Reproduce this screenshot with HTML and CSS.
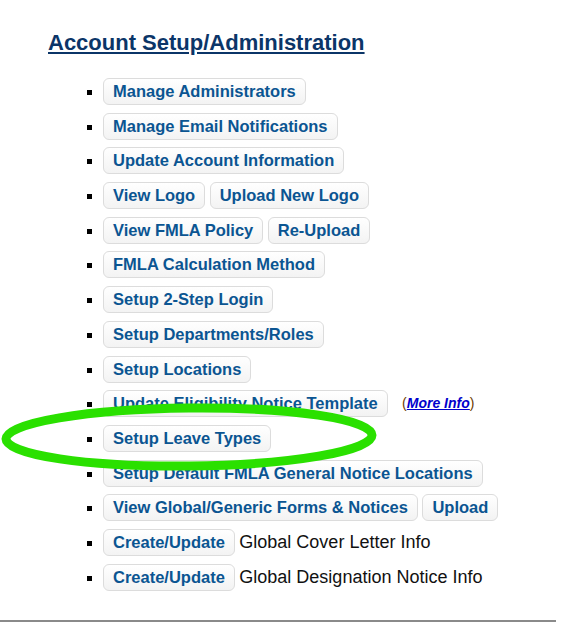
FILE: index.html
```html
<!DOCTYPE html>
<html lang="en">
<head>
    <meta charset="UTF-8">
    <meta name="viewport" content="width=device-width, initial-scale=1.0">
    <title>Account Setup/Administration</title>
    <link rel="stylesheet" href="styles.css">
</head>
<body>
    <div class="page">
        <h2 class="section-title">Account Setup/Administration</h2>

        <ul class="admin-list">
            <li><a class="btn" href="#">Manage Administrators</a></li>
            <li><a class="btn" href="#">Manage Email Notifications</a></li>
            <li><a class="btn" href="#">Update Account Information</a></li>
            <li><a class="btn" href="#">View Logo</a> <a class="btn" href="#">Upload New Logo</a></li>
            <li><a class="btn" href="#">View FMLA Policy</a> <a class="btn" href="#">Re-Upload</a></li>
            <li><a class="btn" href="#">FMLA Calculation Method</a></li>
            <li><a class="btn" href="#">Setup 2-Step Login</a></li>
            <li><a class="btn" href="#">Setup Departments/Roles</a></li>
            <li><a class="btn" href="#">Setup Locations</a></li>
            <li>
                <a class="btn" href="#">Update Eligibility Notice Template</a>
                <span class="more-info">(<a href="#">More Info</a>)</span>
            </li>
            <li><a class="btn" href="#">Setup Leave Types</a></li>
            <li><a class="btn" href="#">Setup Default FMLA General Notice Locations</a></li>
            <li><a class="btn" href="#">View Global/Generic Forms &amp; Notices</a> <a class="btn" href="#">Upload</a></li>
            <li><a class="btn" href="#">Create/Update</a> <span class="label">Global Cover Letter Info</span></li>
            <li><a class="btn" href="#">Create/Update</a> <span class="label">Global Designation Notice Info</span></li>
        </ul>

        <div class="divider"></div>

        <!-- highlight drawn over the list -->
        <svg class="highlight" width="390" height="90" viewBox="0 0 390 90">
            <ellipse cx="189" cy="38" rx="183" ry="29" fill="none" stroke="#2ae000" stroke-width="9" transform="rotate(-0.6 189 38)"/>
        </svg>
    </div>
</body>
</html>
```

FILE: styles.css
```css
body {
    margin: 0;
    padding: 0;
    background: #fff;
    font-family: "Liberation Sans", Arial, sans-serif;
}

.page {
    position: relative;
    width: 574px;
    height: 623px;
    overflow: hidden;
    padding-top: 31px;
    box-sizing: border-box;
}

.section-title {
    margin: 0 0 0 48px;
    font-size: 22px;
    font-weight: bold;
    line-height: 24px;
    color: #0b3568;
    text-decoration: underline;
    text-underline-offset: 2px;
}

.admin-list {
    margin: 23px 0 0 0;
    padding-left: 103px;
    list-style: square;
}

.admin-list li {
    height: 27px;
    margin-bottom: 7.7px;
    line-height: 27px;
    white-space: nowrap;
}

.btn {
    display: inline-block;
    box-sizing: border-box;
    height: 27px;
    padding: 0 9px;
    line-height: 25px;
    font-size: 16.5px;
    font-weight: bold;
    color: #0b5592;
    text-decoration: none;
    background: linear-gradient(#ffffff, #f3f3f3);
    border: 1px solid #dcdcdc;
    border-radius: 6px;
    vertical-align: top;
}

.more-info {
    margin-left: 10px;
    font-size: 14px;
    color: #6b3a00;
    vertical-align: top;
}

.more-info a {
    color: #0000cc;
    font-weight: bold;
    font-style: italic;
}

.label {
    font-size: 18px;
    color: #111;
    vertical-align: top;
}

.divider {
    position: absolute;
    left: 0;
    top: 620px;
    width: 556px;
    border-top: 2px solid #8a8a8a;
}

.highlight {
    position: absolute;
    left: 0;
    top: 399px;
}
```
